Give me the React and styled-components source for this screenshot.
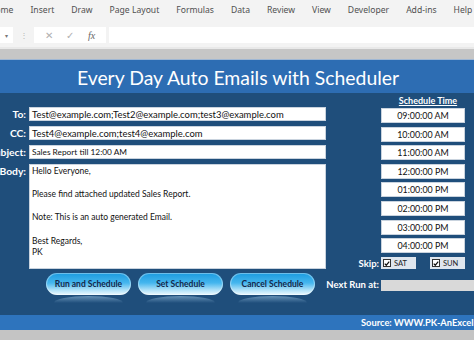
import React from "react";
import styled, { createGlobalStyle } from "styled-components";

const Global = createGlobalStyle`
  html, body { margin: 0; padding: 0; }
  body { width: 474px; height: 340px; overflow: hidden; background: #c4c4c4; }
  * { box-sizing: border-box; }
`;

const Page = styled.div`
  width: 474px;
  height: 340px;
  display: flex;
  flex-direction: column;
  overflow: hidden;
  font-family: Lato, "Noto Sans", sans-serif;
`;

const TabBar = styled.div`
  height: 20px;
  background: #f3f3f3;
  display: flex;
  align-items: center;
  gap: 17px;
  margin-left: -11px;
  font-family: "Noto Sans", sans-serif;
  font-size: 8.6px;
  color: #505050;
  white-space: nowrap;
`;

const Tab = styled.span``;

const FormulaBar = styled.div`
  height: 29px;
  background: #f3f3f3;
  display: flex;
  align-items: flex-start;
  padding-top: 7px;
  border-bottom: 2px solid #e9e9e9;
`;

const NameBox = styled.div`
  width: 13px;
  height: 16px;
  background: #fff;
  display: flex;
  align-items: center;
  justify-content: center;
  font-size: 6px;
  color: #777;
`;

const Grip = styled.div`
  width: 21px;
  height: 16px;
  display: flex;
  align-items: center;
  justify-content: center;
  color: #b5b5b5;
  font-size: 8px;
`;

const FxBox = styled.div`
  width: 72px;
  height: 16px;
  background: #fff;
  display: flex;
  align-items: center;
  justify-content: space-around;
  padding: 0 4px;
  color: #b0b0b0;
  font-size: 10px;
`;

const Fx = styled.span`
  font-family: "Liberation Serif", serif;
  font-style: italic;
  color: #666;
  font-size: 10px;
`;

const FormulaInput = styled.div`
  flex: 1;
  height: 16px;
  margin-left: 3px;
  background: #fff;
`;

const GrayStrip = styled.div`
  height: 11px;
  background: #c6c6c6;
  border-bottom: 1px solid #9fb7d4;
`;

const Sheet = styled.div`
  height: 270px;
  background: #1f4e7b;
  display: flex;
  flex-direction: column;
`;

const TitleBand = styled.div`
  height: 33px;
  background: #2d6db3;
  color: #fff;
  font-size: 19.4px;
  display: flex;
  align-items: center;
  justify-content: center;
  padding-left: 2px;
  padding-top: 1px;
  white-space: nowrap;
`;

const Body = styled.div`
  display: flex;
  height: 222px;
`;

const Left = styled.div`
  width: 381px;
  display: flex;
  flex-direction: column;
`;

const Form = styled.div`
  display: flex;
  flex-direction: column;
  gap: 5px;
  padding-top: 14px;
`;

const Field = styled.div`
  display: flex;
  align-items: ${(p) => (p.$top ? "flex-start" : "center")};
`;

const Label = styled.div`
  width: 26px;
  display: flex;
  justify-content: flex-end;
  white-space: nowrap;
  color: #fff;
  font-weight: 700;
  font-size: 10.3px;
  padding-top: ${(p) => (p.$top ? "1px" : "0")};
`;

const Input = styled.div`
  margin-left: 3px;
  width: 297px;
  height: 14px;
  background: #fff;
  border: 1px solid #c9d3de;
  color: #111;
  font-size: ${(p) => p.$fs || 9.45}px;
  padding: 0 0 0 2px;
  display: flex;
  align-items: center;
  white-space: nowrap;
  overflow: hidden;
`;

const BodyText = styled.div`
  margin-left: 3px;
  width: 297px;
  height: 105px;
  background: #fff;
  border: 1px solid #c9d3de;
  color: #111;
  font-size: 8.5px;
  line-height: 11.6px;
  padding: 1px 0 0 2px;
  white-space: pre;
`;

const Buttons = styled.div`
  display: flex;
  gap: 7px;
  padding-left: 46px;
  margin-top: 4px;
`;

const Pill = styled.div`
  position: relative;
  width: 85px;
  height: 22px;
  border-radius: 11px;
  background: linear-gradient(180deg, #1b9be0 0%, #45b6ee 45%, #a9def7 75%, #eefaff 100%);
  box-shadow: inset 0 0 0 1px rgba(255,255,255,0.35);
  display: flex;
  align-items: center;
  justify-content: center;
  color: #14284a;
  font-weight: 700;
  font-size: 8.5px;
  white-space: nowrap;
  &::after {
    content: "";
    position: absolute;
    left: 8px;
    right: 8px;
    top: 23px;
    height: 7px;
    border-radius: 50% 50% 0 0 / 100% 100% 0 0;
    background: linear-gradient(180deg, rgba(160,200,230,0.55), rgba(60,110,160,0));
  }
`;

const Right = styled.div`
  width: 93px;
  display: flex;
  flex-direction: column;
`;

const SchedHead = styled.div`
  height: 15px;
  width: 84px;
  padding-left: 10px;
  padding-bottom: 1px;
  display: flex;
  align-items: center;
  justify-content: center;
  color: #fff;
  font-weight: 700;
  font-size: 9px;
  text-decoration: underline;
`;

const Times = styled.div`
  display: flex;
  flex-direction: column;
  gap: 3.6px;
`;

const TimeBox = styled.div`
  width: 84px;
  height: 15px;
  background: #fff;
  border: 1px solid #c9d3de;
  display: flex;
  align-items: center;
  justify-content: center;
  font-size: 8.9px;
  color: #111;
`;

const SkipRow = styled.div`
  display: flex;
  align-items: center;
  gap: 14px;
  margin-top: 4px;
  height: 12px;
  position: relative;
`;

const SideLabel = styled.span`
  position: absolute;
  right: 95px;
  color: #fff;
  font-weight: 700;
  font-size: 9.5px;
  white-space: nowrap;
`;

const Check = styled.div`
  width: 35px;
  height: 12px;
  background: #dfe6ee;
  display: flex;
  align-items: center;
  gap: 3px;
  padding-left: 2px;
  font-size: 7.5px;
  color: #222;
`;

const Tick = styled.span`
  width: 8px;
  height: 8px;
  background: #fff;
  border: 1px solid #333;
  display: flex;
  align-items: center;
  justify-content: center;
`;

const NextRow = styled.div`
  position: relative;
  margin-top: 11px;
  height: 11px;
  background: #d9d9d9;
  width: 93px;
`;

const Footer = styled.div`
  height: 15px;
  background: #2e74bd;
  display: flex;
  align-items: center;
  padding-left: 361px;
  color: #fff;
  font-weight: 700;
  font-size: 9.3px;
  white-space: nowrap;
  overflow: hidden;
  margin-top: auto;
`;

const CheckMark = () => (
  <svg width="7" height="7" viewBox="0 0 8 8">
    <path d="M1 4.2 L3 6.3 L7 1.5" fill="none" stroke="#111" strokeWidth="1.6" />
  </svg>
);

const times = [
  "09:00:00 AM",
  "10:00:00 AM",
  "11:00:00 AM",
  "12:00:00 PM",
  "01:00:00 PM",
  "02:00:00 PM",
  "03:00:00 PM",
  "04:00:00 PM",
];

const tabs = ["Home", "Insert", "Draw", "Page Layout", "Formulas", "Data", "Review", "View", "Developer", "Add-ins", "Help"];

export default function App() {
  return (
    <Page>
      <Global />
      <TabBar>
        {tabs.map((t) => (
          <Tab key={t}>{t}</Tab>
        ))}
      </TabBar>
      <FormulaBar>
        <NameBox>▾</NameBox>
        <Grip>⋮</Grip>
        <FxBox>
          <span>✕</span>
          <span>✓</span>
          <Fx>fx</Fx>
        </FxBox>
        <FormulaInput />
      </FormulaBar>
      <GrayStrip />
      <Sheet>
        <TitleBand>Every Day Auto Emails with Scheduler</TitleBand>
        <Body>
          <Left>
            <Form>
              <Field>
                <Label>To:</Label>
                <Input>Test@example.com;Test2@example.com;test3@example.com</Input>
              </Field>
              <Field>
                <Label>CC:</Label>
                <Input>Test4@example.com;test4@example.com</Input>
              </Field>
              <Field>
                <Label>Subject:</Label>
                <Input $fs={8.3}>Sales Report till 12:00 AM</Input>
              </Field>
              <Field $top>
                <Label $top>Body:</Label>
                <BodyText>{"Hello Everyone,\n\nPlease find attached updated Sales Report.\n\nNote: This is an auto generated Email.\n\nBest Regards,\nPK"}</BodyText>
              </Field>
            </Form>
            <Buttons>
              <Pill>Run and Schedule</Pill>
              <Pill>Set Schedule</Pill>
              <Pill>Cancel Schedule</Pill>
            </Buttons>
          </Left>
          <Right>
            <SchedHead>Schedule Time</SchedHead>
            <Times>
              {times.map((t) => (
                <TimeBox key={t}>{t}</TimeBox>
              ))}
            </Times>
            <SkipRow>
              <SideLabel>Skip:</SideLabel>
              <Check>
                <Tick><CheckMark /></Tick>SAT
              </Check>
              <Check>
                <Tick><CheckMark /></Tick>SUN
              </Check>
            </SkipRow>
            <NextRow>
              <SideLabel style={{ top: "-1px" }}>Next Run at:</SideLabel>
            </NextRow>
          </Right>
        </Body>
        <Footer>Source: WWW.PK-AnExcelExpert.com</Footer>
      </Sheet>
    </Page>
  );
}
